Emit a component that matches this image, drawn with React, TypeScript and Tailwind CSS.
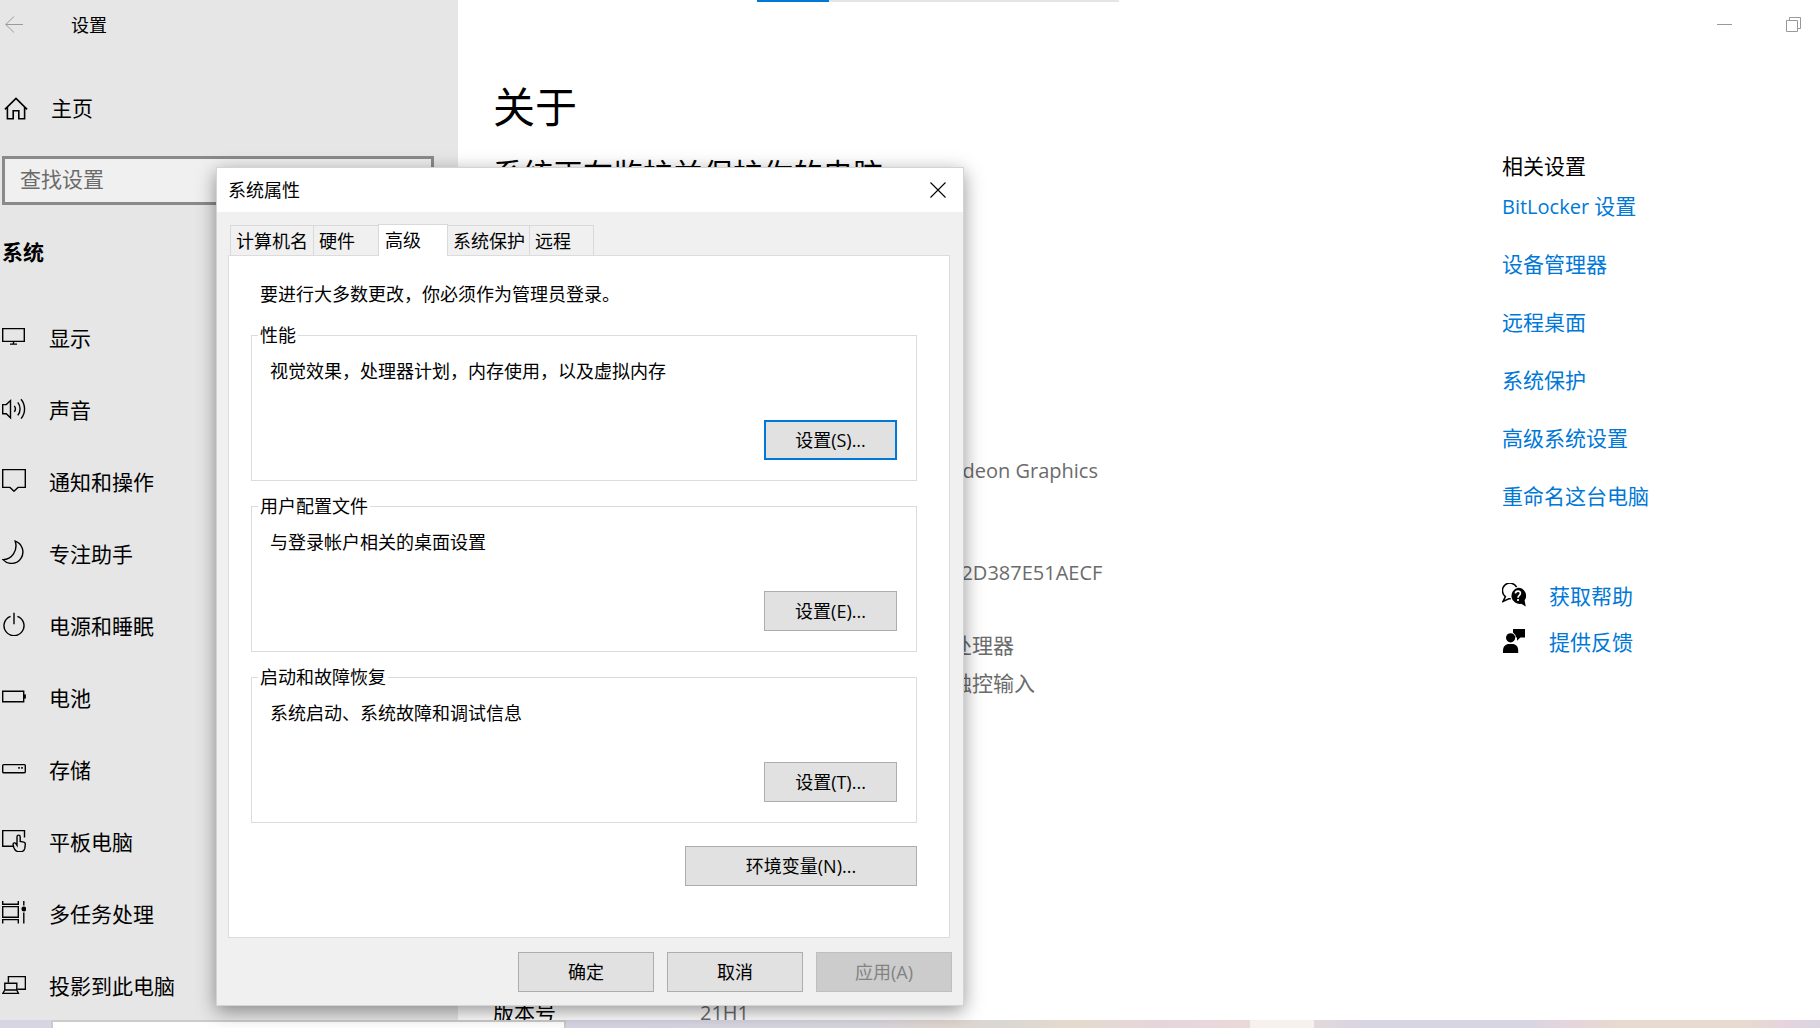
import React from "react";

type IconProps = { children: React.ReactNode; className?: string };

const Icon = ({ children, className = "" }: IconProps) => (
  <svg
    viewBox="0 0 24 24"
    width="24"
    height="24"
    fill="none"
    stroke="currentColor"
    strokeWidth="1.4"
    aria-hidden="true"
    className={`shrink-0 ${className}`}
  >
    {children}
  </svg>
);

const navItems = [
  {
    label: "显示",
    icon: (
      <>
        <path d="M.7 4.6h21.6v12.8H.7z" />
        <path d="M11.5 17.4v2.7M8 20.1h7" />
      </>
    ),
  },
  {
    label: "声音",
    icon: (
      <>
        <path d="M.7 8.6h3.6l4.2-4v17.2l-4.2-4H.7z" />
        <path d="M12.3 9.9a5 5 0 0 1 0 6M15.8 6.4a10.5 10.5 0 0 1 0 13M19 3.2a15 15 0 0 1 0 19.4" />
      </>
    ),
  },
  {
    label: "通知和操作",
    icon: <path d="M.7 1.6h22.6v17.8h-7.3L12 23.2l-4-3.8H.7z" />,
  },
  {
    label: "专注助手",
    icon: <path d="M13.2 1.2A11.4 11.4 0 1 1 1 19.6C9.8 19.3 16.2 10.5 13.2 1.2z" />,
  },
  {
    label: "电源和睡眠",
    icon: <path d="M12 .8v11.4M8.6 4.3a10 10 0 1 0 6.8 0" />,
  },
  {
    label: "电池",
    icon: (
      <>
        <path d="M.7 7.2h21v10.6h-21z" />
        <path d="M22.9 10.4v4.2" strokeWidth="2" />
      </>
    ),
  },
  {
    label: "存储",
    icon: (
      <>
        <rect x=".7" y="8.6" width="22.6" height="8.2" rx="1" />
        <path d="M16.2 11.9h1.6M19.2 11.9h1.6" strokeWidth="1.6" />
      </>
    ),
  },
  {
    label: "平板电脑",
    icon: (
      <>
        <path d="M11.2 18.2H.7V2.6h21.8v7" />
        <path d="M15 17.4V8.8c0-2.3 3.2-2.3 3.2 0v4.6l3.6.7c1.2.3 1.6 1.1 1.5 2.3l-.5 4c-.5 2.2-2.2 3.4-5 3.4-3.1 0-5-1.5-5.9-4.1l-.8-3.2c-.2-1.7 2-2.2 2.8-.8z" />
      </>
    ),
  },
  {
    label: "多任务处理",
    icon: (
      <>
        <path d="M.7 1v3.2h15.6V1M.7 6.6h15.6v10.6H.7zM.7 23.6v-4h15.6v4M21.8 1v4.4M21.8 12.6v11" />
        <circle cx="21.8" cy="9" r="1.7" fill="currentColor" />
      </>
    ),
  },
  {
    label: "投影到此电脑",
    icon: (
      <>
        <path d="M6.4 10.4V4.6h17v12.6h-8" />
        <path d="M2.8 11.2h12v6.8h-12zM2.8 18 .8 21.4h15.6L14.8 18" />
      </>
    ),
  },
];

const relatedLinks = ["设备管理器", "远程桌面", "系统保护", "高级系统设置", "重命名这台电脑"];

const tabs = [
  { label: "计算机名", width: "w-[83px]" },
  { label: "硬件", width: "w-[65px]" },
  { label: "高级", width: "w-[70px]", active: true },
  { label: "系统保护", width: "w-[82px]" },
  { label: "远程", width: "w-[65px]" },
];

const groups = [
  { title: "性能", text: "视觉效果，处理器计划，内存使用，以及虚拟内存", button: "设置(S)...", focused: true },
  { title: "用户配置文件", text: "与登录帐户相关的桌面设置", button: "设置(E)..." },
  { title: "启动和故障恢复", text: "系统启动、系统故障和调试信息", button: "设置(T)..." },
];

function Sidebar() {
  return (
    <aside className="flex w-[458px] shrink-0 flex-col bg-[#e6e6e6]">
      <header className="flex h-[49px] shrink-0 items-center pl-[5px]">
        <button aria-label="返回" className="text-[#9a9a9a]">
          <svg viewBox="0 0 18 18" width="18" height="18" fill="none" stroke="currentColor" aria-hidden="true">
            <path d="M18 8.5H.8M9 .5l-8.3 8L9 16.5" />
          </svg>
        </button>
        <span className="ml-12 text-lg">设置</span>
      </header>
      <a href="#home" className="mt-9 flex h-12 shrink-0 items-center gap-[23px] pl-1">
        <Icon>
          <path d="m.9 12.4 11.1-11 11.1 11M3.4 10.2v11.6h5.8v-8h5.6v8h5.8V10.2" strokeWidth="1.6" />
        </Icon>
        <span>主页</span>
      </a>
      <input
        type="search"
        aria-label="查找设置"
        placeholder="查找设置"
        className="mt-[23px] mr-6 ml-0.5 h-[49px] shrink-0 border-[3px] border-[#8a8a8a] bg-[#f0f0f0] px-[15px] pb-1 outline-none placeholder:text-[#6b6b6b]"
      />
      <h2 className="mt-[31px] ml-0.5 leading-8 font-bold">系统</h2>
      <nav className="mt-[35px] flex flex-col">
        {navItems.map((item) => (
          <a key={item.label} href="#settings" className="flex h-[72px] shrink-0 items-center gap-[23px] pl-0.5">
            <Icon className="-mt-1.5">{item.icon}</Icon>
            <span>{item.label}</span>
          </a>
        ))}
      </nav>
    </aside>
  );
}

function About() {
  return (
    <main className="min-w-0 flex-1 pl-[35px]">
      <h1 className="mt-[79px] text-[42px] leading-14">关于</h1>
      <h2 className="mt-[19px] text-3xl leading-10">系统正在监护并保护你的电脑</h2>
      <div className="mt-[258px] flex flex-col pl-[446px] leading-[38px] text-[#6b6b6b]">
        <p className="text-xl leading-[38px]">Radeon Graphics</p>
        <p className="mt-16 pl-4 text-xl leading-[38px]">-2D387E51AECF</p>
        <p className="mt-[34px] pl-3">处理器</p>
        <p className="pl-3">触控输入</p>
      </div>
      <dl className="mt-[295px] flex items-center">
        <dt className="w-[207px]">版本号</dt>
        <dd className="text-xl text-[#6b6b6b]">21H1</dd>
      </dl>
    </main>
  );
}

function Related() {
  return (
    <aside className="flex w-[318px] shrink-0 flex-col">
      <div className="flex h-[50px] items-center justify-end gap-[53px] pr-[18px] text-[#999]">
        <button aria-label="最小化">
          <svg viewBox="0 0 16 16" width="16" height="16" stroke="currentColor" aria-hidden="true">
            <path d="M0 7.5h15" />
          </svg>
        </button>
        <button aria-label="还原">
          <svg viewBox="0 0 16 16" width="16" height="16" fill="none" stroke="currentColor" aria-hidden="true">
            <path d="M.5 3.5h11v11H.5zM3.5 3V.5h11v11H12" />
          </svg>
        </button>
      </div>
      <h2 className="mt-[100px] leading-8">相关设置</h2>
      <ul className="mt-2 flex flex-col gap-[26px] leading-8 text-[#0078d7]">
        <li className="h-8">
          <a href="#bitlocker">
            <span className="text-xl leading-8">BitLocker </span>设置
          </a>
        </li>
        {relatedLinks.map((label) => (
          <li key={label} className="h-8">
            <a href="#related">{label}</a>
          </li>
        ))}
      </ul>
      <div className="mt-[61px] flex flex-col leading-[46px]">
        <a href="#help" className="flex items-center gap-[23px]">
          <Icon className="-mt-0.5">
            <path d="M14.6 4.2A7.5 7.5 0 1 0 3.4 13.6L1 18.4l5.8-2.6h2" strokeWidth="1.5" />
            <path
              d="M16 4.8a8 8 0 0 1 6.6 12.6l1.2 6-4.6-2.6A8 8 0 1 1 16 4.8z"
              fill="currentColor"
              stroke="none"
            />
            <path d="M13.4 10.4c.2-3.2 5.2-3 5 .1-.1 1.9-2.4 1.9-2.4 4.2M16 16v1.9" stroke="white" strokeWidth="1.7" />
          </Icon>
          <span className="text-[#0078d7]">获取帮助</span>
        </a>
        <a href="#feedback" className="flex items-center gap-[23px]">
          <Icon className="-mt-0.5">
            <g fill="currentColor" stroke="none">
              <path d="M11 0h12v8.6h-4.6L15 11.8V8.6h-1.2A6 6 0 0 0 11 3.4z" />
              <circle cx="8.6" cy="8.8" r="4.6" />
              <path d="M1 24v-2.6C1 17.4 3.8 15 7 15h3.4c3.2 0 5.8 2.4 5.8 6.4V24z" />
            </g>
          </Icon>
          <span className="text-[#0078d7]">提供反馈</span>
        </a>
      </div>
    </aside>
  );
}

const buttonClass = "h-10 border border-[#adadad] bg-[#e1e1e1] pb-px";

function PropertiesDialog() {
  return (
    <section
      role="dialog"
      aria-label="系统属性"
      className="absolute top-[167px] left-[216px] flex w-[748px] flex-col border border-[#d4d4d4] bg-[#f0f0f0] text-lg shadow-[0_5px_18px_rgba(0,0,0,0.42)]"
    >
      <header className="flex h-11 items-center justify-between bg-white pr-[17px] pb-px pl-[11px]">
        <h2>系统属性</h2>
        <button aria-label="关闭">
          <svg viewBox="0 0 16 16" width="16" height="16" stroke="currentColor" strokeWidth="1.1" aria-hidden="true">
            <path d="m.5.5 15 15M15.5.5l-15 15" />
          </svg>
        </button>
      </header>
      <div className="pt-3 pr-[13px] pb-[13px] pl-[11px]">
        <div role="tablist" className="flex items-end pl-0.5">
          {tabs.map((tab) => (
            <button
              key={tab.label}
              role="tab"
              aria-selected={!!tab.active}
              className={`${tab.width} border-t border-[#d9d9d9] text-left leading-7 ${
                tab.active
                  ? "relative -mr-px -mb-px h-8 border-x bg-white pb-0.5 pl-1.5"
                  : "h-[30px] border-l pl-[5px] last:border-r"
              }`}
            >
              {tab.label}
            </button>
          ))}
        </div>
        <div role="tabpanel" className="border border-[#dcdcdc] bg-white pt-6 pr-8 pb-[51px] pl-[22px]">
          <p className="pl-[9px] leading-7">要进行大多数更改，你必须作为管理员登录。</p>
          <div className="mt-3.5 flex flex-col gap-3">
            {groups.map((group) => (
              <fieldset key={group.title} className="border border-[#dcdcdc] px-[19px]">
                <legend className="-ml-[13px] px-[2px] leading-[26px]">{group.title}</legend>
                <div className="flex h-[132px] flex-col pb-5">
                  <p className="-ml-px pt-[9px] leading-7">{group.text}</p>
                  <button
                    className={`mt-auto w-[133px] self-end ${
                      group.focused ? "h-10 border-2 border-[#0078d7] bg-[#e1e1e1] pb-px" : buttonClass
                    }`}
                  >
                    {group.button}
                  </button>
                </div>
              </fieldset>
            ))}
          </div>
          <div className="mt-[23px] flex justify-end">
            <button className={`w-[232px] ${buttonClass}`}>环境变量(N)...</button>
          </div>
        </div>
        <footer className="-mr-0.5 mt-3.5 flex justify-end gap-[13px]">
          <button className={`w-[136px] ${buttonClass}`}>确定</button>
          <button className={`w-[136px] ${buttonClass}`}>取消</button>
          <button disabled className="h-10 w-[136px] border border-[#bfbfbf] bg-[#cccccc] pb-px text-[#838383]">
            应用(A)
          </button>
        </footer>
      </div>
    </section>
  );
}

export default function App() {
  return (
    <div className="relative flex h-screen flex-col overflow-hidden bg-white font-['Open_Sans','Noto_Sans_CJK_SC',sans-serif] text-[21px] text-black">
      <div className="flex min-h-0 flex-1 overflow-hidden">
        <Sidebar />
        <About />
        <Related />
      </div>
      <div className="flex h-2 shrink-0 bg-[linear-gradient(90deg,#d7d5e3_0%,#d7d5e3_35%,#d8d6de_48%,#e1d6ce_52%,#d9d7d3_55%,#e6dacd_59%,#e6d5dd_64%,#ecdad8_70%,#d8d5e3_75%,#d8d5e3_84%,#e6d4dc_86%,#e8dacf_89%,#e8dacf_96%,#e6d3dd_98%,#d8d5e3_100%)] pl-[51px]">
        <div className="w-[515px] border-x-2 border-t-2 border-[#cbcbcb] bg-white" />
        <div className="ml-auto mr-[506px] w-16 bg-[#f7f1ee]" />
      </div>
      <div role="progressbar" aria-label="加载" className="absolute top-0 left-[757px] h-0.5 w-[362px] bg-[#e5e5e5]">
        <div className="h-full w-1/5 bg-[#0078d7]" />
      </div>
      <PropertiesDialog />
    </div>
  );
}
